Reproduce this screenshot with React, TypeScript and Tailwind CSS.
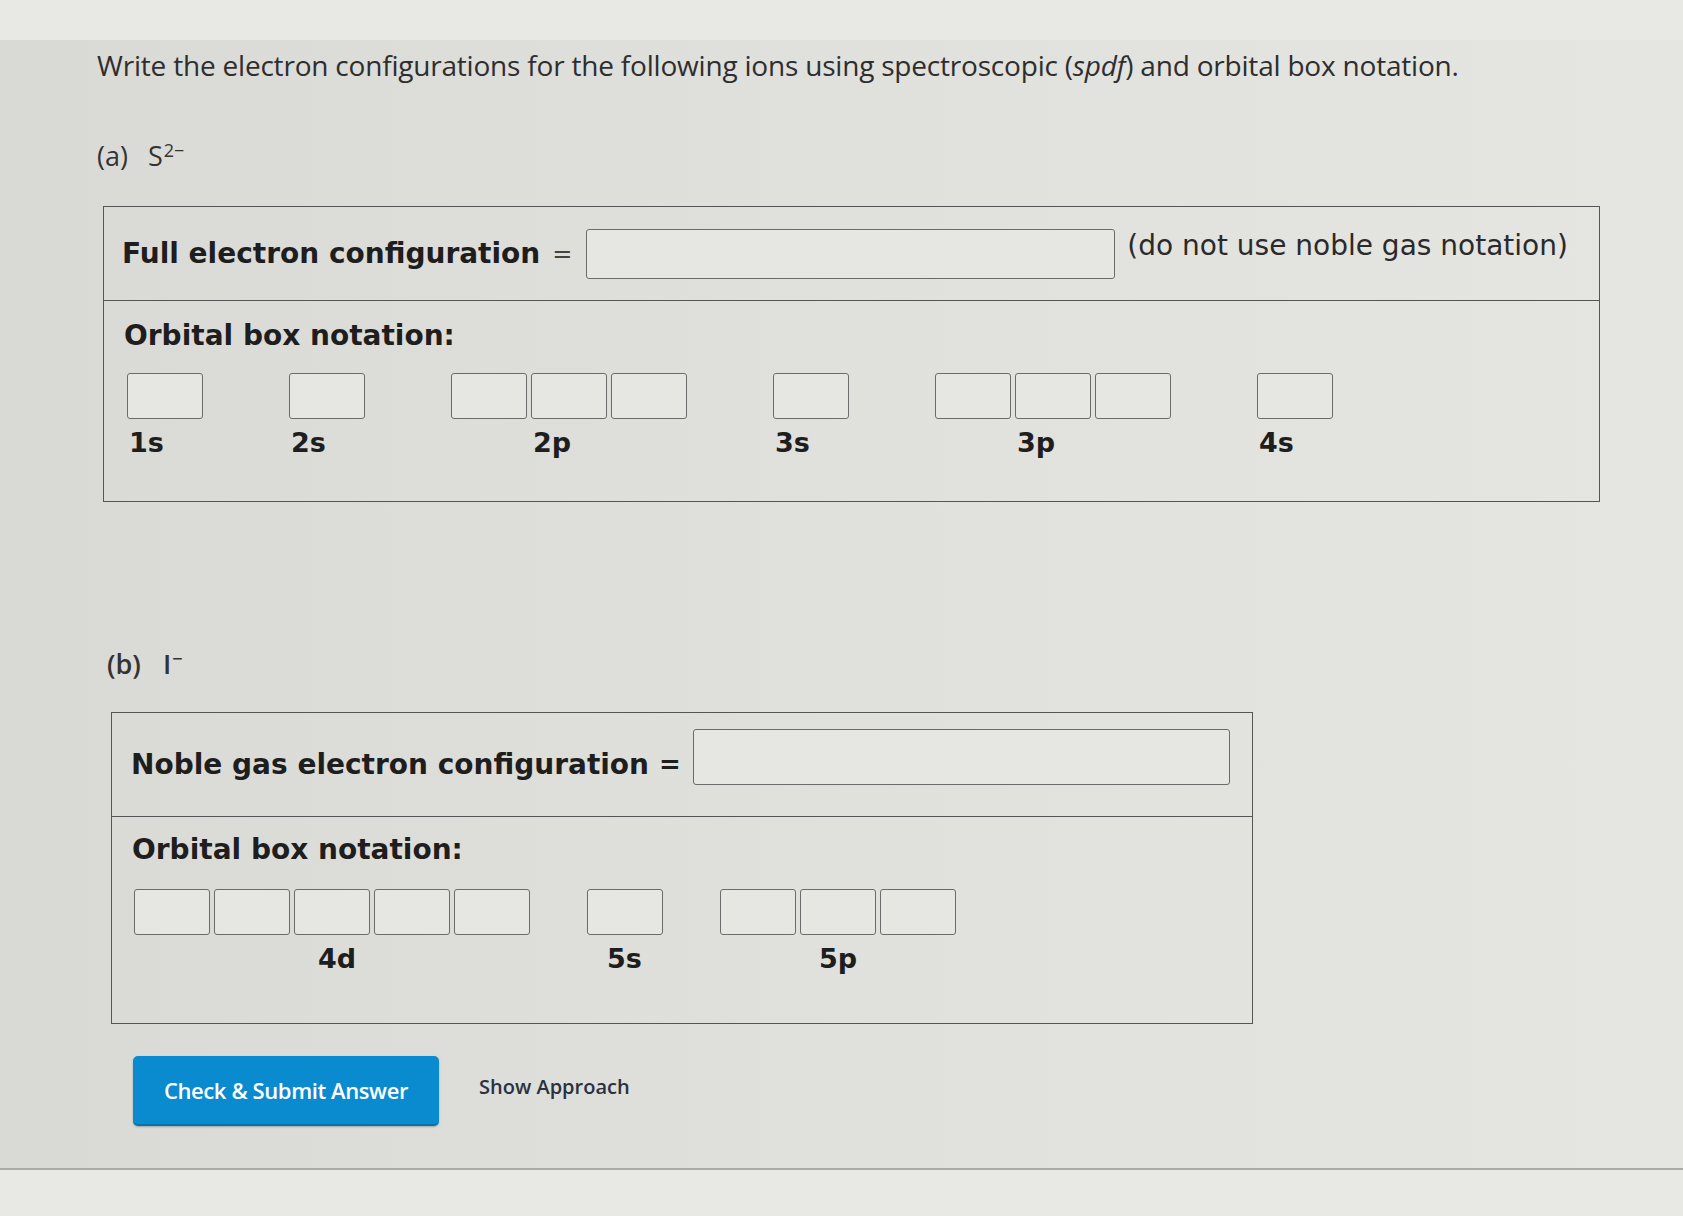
import React from 'react';

const Box: React.FC = () => (
  <div className="w-[76px] h-[46px] border border-[#6b6b6b] rounded-[3px] bg-[#e6e6e3]" />
);

type Group = { label: string; count: number; labelOffset: number };

const Orbital: React.FC<{ group: Group }> = ({ group }) => (
  <div className="flex flex-col">
    <div className="flex gap-[4px]">
      {Array.from({ length: group.count }).map((_, i) => (
        <Box key={i} />
      ))}
    </div>
    <div className="flex mt-[8px]">
      {group.labelOffset === 2 && <span className="w-[2px]" />}
      {group.labelOffset === 20 && <span className="w-[20px]" />}
      {group.labelOffset === 82 && <span className="w-[82px]" />}
      {group.labelOffset === 99 && <span className="w-[99px]" />}
      {group.labelOffset === 184 && <span className="w-[184px]" />}
      <span className="font-['DejaVu_Sans',sans-serif] font-bold text-[27px] leading-[32px] text-[#1e1e1e]">
        {group.label}
      </span>
    </div>
  </div>
);

const groupsA: Group[] = [
  { label: '1s', count: 1, labelOffset: 2 },
  { label: '2s', count: 1, labelOffset: 2 },
  { label: '2p', count: 3, labelOffset: 82 },
  { label: '3s', count: 1, labelOffset: 2 },
  { label: '3p', count: 3, labelOffset: 82 },
  { label: '4s', count: 1, labelOffset: 2 },
];

const groupsB: Group[] = [
  { label: '4d', count: 5, labelOffset: 184 },
  { label: '5s', count: 1, labelOffset: 20 },
  { label: '5p', count: 3, labelOffset: 99 },
];

export default function App() {
  return (
    <div className="w-[1683px] h-[1216px] bg-gradient-to-r from-[#d9d9d6] via-[#e0e0dd] to-[#e5e5e2] overflow-hidden flex flex-col font-['Open_Sans',sans-serif]">
      <div className="h-[40px] bg-[#e8e8e5] shrink-0" />
      <div className="flex flex-col pl-[97px] flex-1">
        {/* question */}
        <p className="mt-[8px] text-[28px] leading-[34px] text-[#2e2e2e] tracking-[-0.2px]">
          Write the electron configurations for the following ions using spectroscopic (<i>spdf</i>) and orbital box notation.
        </p>

        <div className="mt-[58px] flex items-baseline gap-[20px] text-[27px] leading-[32px] text-[#333]">
          <span>(a)</span>
          <span>
            S<sup className="text-[18px] ml-[1px]">2−</sup>
          </span>
        </div>

        <div className="mt-[34px] ml-[6px] w-[1497px] border border-[#555] flex flex-col">
          <div className="h-[94px] flex items-center pl-[18px] border-b border-[#555]">
            <span className="font-['DejaVu_Sans',sans-serif] font-bold text-[28px] text-[#1e1e1e]">
              Full electron configuration
            </span>
            <span className="ml-[12px] font-['DejaVu_Sans',sans-serif] text-[24px] text-[#444]">=</span>
            <div className="ml-[14px] w-[529px] h-[50px] border border-[#6b6b6b] rounded-[3px] bg-[#e6e6e3]" />
            <span className="ml-[12px] font-['DejaVu_Sans',sans-serif] text-[28px] text-[#2a2a2a] -mt-[16px] whitespace-nowrap">
              (do not use noble gas notation)
            </span>
          </div>
          <div className="h-[200px] flex flex-col pl-[20px] pt-[18px]">
            <span className="font-['DejaVu_Sans',sans-serif] font-bold text-[28px] leading-[34px] text-[#1e1e1e]">
              Orbital box notation:
            </span>
            <div className="mt-[20px] flex gap-[86px] pl-[3px]">
              {groupsA.map((g) => (
                <Orbital key={g.label} group={g} />
              ))}
            </div>
          </div>
        </div>

        <div className="mt-[146px] ml-[10px] flex items-baseline gap-[22px] text-[27px] leading-[32px] font-semibold text-[#333]">
          <span>(b)</span>
          <span>
            I<sup className="text-[18px] ml-[1px]">−</sup>
          </span>
        </div>

        <div className="mt-[32px] ml-[14px] w-[1142px] border border-[#555] flex flex-col">
          <div className="h-[104px] flex items-center pl-[19px] border-b border-[#555]">
            <span className="font-['DejaVu_Sans',sans-serif] font-bold text-[28px] text-[#1e1e1e] whitespace-nowrap">
              Noble gas electron configuration
            </span>
            <span className="ml-[10px] font-['DejaVu_Sans',sans-serif] font-bold text-[26px] text-[#1e1e1e]">=</span>
            <div className="ml-[12px] w-[537px] h-[56px] border border-[#6b6b6b] rounded-[3px] bg-[#e6e6e3] -mt-[16px]" />
          </div>
          <div className="h-[206px] flex flex-col pl-[20px] pt-[16px]">
            <span className="font-['DejaVu_Sans',sans-serif] font-bold text-[28px] leading-[34px] text-[#1e1e1e]">
              Orbital box notation:
            </span>
            <div className="mt-[22px] flex gap-[57px] pl-[2px]">
              {groupsB.map((g) => (
                <Orbital key={g.label} group={g} />
              ))}
            </div>
          </div>
        </div>

        <div className="mt-[32px] ml-[36px] flex items-center gap-[40px]">
          <button className="w-[306px] h-[70px] rounded-[5px] bg-[#0a8bd0] border-b-2 border-[#0872aa] text-white text-[22px] font-semibold tracking-[-0.4px] shadow-[0_1px_2px_rgba(0,0,0,0.25)]">
            Check &amp; Submit Answer
          </button>
          <span className="text-[20px] font-semibold text-[#2b3140] -mt-[8px]">Show Approach</span>
        </div>

        <div className="flex-1" />
      </div>
      <div className="h-[48px] shrink-0 border-t-2 border-[#a9a9a6] bg-[#e8e8e5]" />
    </div>
  );
}
